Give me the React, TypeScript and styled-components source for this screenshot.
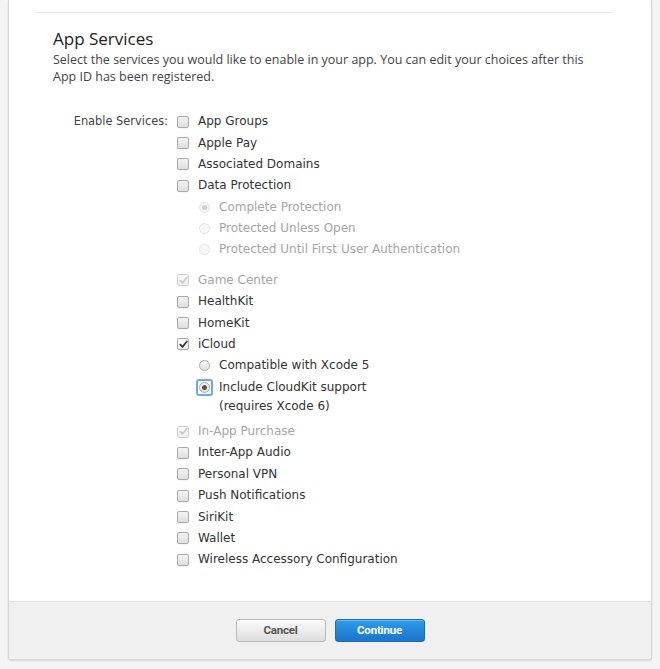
import React from 'react';
import styled, { createGlobalStyle } from 'styled-components';

const GlobalStyle = createGlobalStyle`
  html, body {
    margin: 0;
    padding: 0;
    background: #f4f4f4;
  }
  body {
    font-family: "DejaVu Sans", "Liberation Sans", sans-serif;
    color: #333333;
  }
`;

const Page = styled.div`
  padding: 0 8px 10px 8px;
`;

const Panel = styled.div`
  background: #ffffff;
  border: 1px solid #d6d6d6;
  border-top: none;
  border-radius: 0 0 3px 3px;
  box-shadow: 0 1px 2px rgba(0, 0, 0, 0.12);
  display: flex;
  flex-direction: column;
`;

const Body = styled.div`
  padding: 12px 39px 30px 27px;
`;

const Divider = styled.div`
  height: 1px;
  background: #e6e6e6;
`;

const Section = styled.div`
  padding-left: 17px;
`;

const Title = styled.h2`
  margin: 16px 0 0 0;
  font-family: "Open Sans", "Liberation Sans", sans-serif;
  font-weight: 400;
  font-size: 17px;
  line-height: 20px;
  color: #222222;
`;

const Description = styled.p`
  margin: 2px 0 0 0;
  font-family: "Open Sans", "Liberation Sans", sans-serif;
  font-size: 12.5px;
  line-height: 17px;
  color: #444444;
`;

const Form = styled.div`
  margin-top: 26px;
  display: grid;
  grid-template-columns: 115px 1fr;
  column-gap: 9px;
  align-items: start;
`;

const FieldLabel = styled.div`
  text-align: right;
  font-size: 11.4px;
  line-height: 21.33px;
  color: #444444;
`;

const Options = styled.div`
  display: flex;
  flex-direction: column;
`;

const Row = styled.label<{ $indent?: boolean; $disabled?: boolean }>`
  display: flex;
  align-items: flex-start;
  gap: 9px;
  min-height: 21.33px;
  padding: 1.2px 0;
  box-sizing: border-box;
  padding-left: ${(p) => (p.$indent ? '22px' : '0')};
  font-size: 12px;
  line-height: 19px;
  color: ${(p) => (p.$disabled ? '#a5a5a5' : '#333333')};
`;

const SubGroup = styled.div<{ $after: number }>`
  display: flex;
  flex-direction: column;
  margin-bottom: ${(p) => p.$after}px;
`;

const BoxWrap = styled.span`
  display: flex;
  align-items: center;
  height: 19px;
  flex: none;
`;

const CheckBox = styled.span<{ $checked?: boolean; $disabled?: boolean }>`
  width: 12px;
  height: 12px;
  box-sizing: border-box;
  border-radius: 2px;
  border: 1px solid ${(p) => (p.$disabled ? '#d2d2d2' : '#a9a9a9')};
  background: ${(p) => (p.$disabled
    ? 'linear-gradient(#fbfbfb, #f0f0f0)'
    : p.$checked ? 'linear-gradient(#ffffff, #f1f1f1)' : 'linear-gradient(#f4f4f4, #dedede)')};
  display: flex;
  align-items: center;
  justify-content: center;
  box-shadow: ${(p) => (p.$disabled ? 'none' : '0 0.5px 0 rgba(0,0,0,0.08)')};
`;

const Radio = styled.span<{ $checked?: boolean; $disabled?: boolean }>`
  width: 11px;
  height: 11px;
  box-sizing: border-box;
  border-radius: 50%;
  border: 1px solid ${(p) => (p.$disabled ? '#e2e2e2' : '#aaaaaa')};
  background: ${(p) => (p.$disabled ? '#f7f7f7' : 'linear-gradient(#f8f8f8, #e0e0e0)')};
  display: flex;
  align-items: center;
  justify-content: center;
  &::after {
    content: '';
    display: ${(p) => (p.$checked ? 'block' : 'none')};
    width: 5px;
    height: 5px;
    border-radius: 50%;
    background: ${(p) => (p.$disabled ? '#d0d0d0' : '#555555')};
  }
`;

const FocusRing = styled.span`
  display: flex;
  align-items: center;
  justify-content: center;
  width: 17px;
  height: 17px;
  margin: 0 -3px;
  box-sizing: border-box;
  border: 2px solid #6aa8f2;
  border-radius: 3px;
`;

const RowText = styled.span`
  white-space: pre-line;
`;

const Footer = styled.div`
  background: #f0f0f0;
  border-top: 1px solid #e0e0e0;
  border-radius: 0 0 3px 3px;
  padding: 17px 0 17px 0;
  display: flex;
  justify-content: center;
  gap: 9px;
`;

const Button = styled.button<{ $primary?: boolean }>`
  width: 90px;
  height: 23px;
  box-sizing: border-box;
  border-radius: 3px;
  font-family: "Roboto", "Liberation Sans", sans-serif;
  font-weight: 700;
  font-size: 11.5px;
  letter-spacing: -0.2px;
  cursor: pointer;
  border: 1px solid ${(p) => (p.$primary ? '#1b6cbb' : '#b9b9b9')};
  color: ${(p) => (p.$primary ? '#ffffff' : '#555555')};
  background: ${(p) => (p.$primary
    ? 'linear-gradient(#2b9cea, #1b74cb)'
    : 'linear-gradient(#fbfbfb, #dddddd)')};
  box-shadow: inset 0 1px 0 rgba(255, 255, 255, 0.3);
`;

const Check = ({ disabled }: { disabled?: boolean }): React.ReactElement => (
  <svg width="9" height="9" viewBox="0 0 9 9">
    <path d="M1.3 4.6 L3.5 6.9 L7.8 1.4" fill="none" stroke={disabled ? '#c8c8c8' : '#333333'} strokeWidth="1.7" strokeLinecap="round" strokeLinejoin="round" />
  </svg>
);

interface IOption {
  label: string;
  checked?: boolean;
  disabled?: boolean;
  sub?: { label: string; checked?: boolean; disabled?: boolean; focused?: boolean }[];
  subAfter?: number;
}

const options: IOption[] = [
  { label: 'App Groups' },
  { label: 'Apple Pay' },
  { label: 'Associated Domains' },
  {
    label: 'Data Protection',
    sub: [
      { label: 'Complete Protection', checked: true, disabled: true },
      { label: 'Protected Unless Open', disabled: true },
      { label: 'Protected Until First User Authentication', disabled: true },
    ],
    subAfter: 9,
  },
  { label: 'Game Center', checked: true, disabled: true },
  { label: 'HealthKit' },
  { label: 'HomeKit' },
  {
    label: 'iCloud',
    checked: true,
    sub: [
      { label: 'Compatible with Xcode 5' },
      { label: 'Include CloudKit support\n(requires Xcode 6)', checked: true, focused: true },
    ],
    subAfter: 4,
  },
  { label: 'In-App Purchase', checked: true, disabled: true },
  { label: 'Inter-App Audio' },
  { label: 'Personal VPN' },
  { label: 'Push Notifications' },
  { label: 'SiriKit' },
  { label: 'Wallet' },
  { label: 'Wireless Accessory Configuration' },
];

const App = (): React.ReactElement => {
  return (
    <Page>
      <GlobalStyle />
      <Panel>
        <Body>
          <Divider />
          <Section>
            <Title>App Services</Title>
            <Description>
              Select the services you would like to enable in your app. You can edit your choices after this
              <br />
              App ID has been registered.
            </Description>
            <Form>
              <FieldLabel>Enable Services:</FieldLabel>
              <Options>
                {options.map((option) => (
                  <React.Fragment key={option.label}>
                    <Row $disabled={option.disabled}>
                      <BoxWrap>
                        <CheckBox $checked={option.checked} $disabled={option.disabled}>
                          {option.checked && <Check disabled={option.disabled} />}
                        </CheckBox>
                      </BoxWrap>
                      <RowText>{option.label}</RowText>
                    </Row>
                    {option.sub && (
                      <SubGroup $after={option.subAfter ?? 0}>
                        {option.sub.map((sub) => (
                          <Row key={sub.label} $indent={true} $disabled={sub.disabled}>
                            <BoxWrap>
                              {sub.focused ? (
                                <FocusRing>
                                  <Radio $checked={sub.checked} $disabled={sub.disabled} />
                                </FocusRing>
                              ) : (
                                <Radio $checked={sub.checked} $disabled={sub.disabled} />
                              )}
                            </BoxWrap>
                            <RowText>{sub.label}</RowText>
                          </Row>
                        ))}
                      </SubGroup>
                    )}
                  </React.Fragment>
                ))}
              </Options>
            </Form>
          </Section>
        </Body>
        <Footer>
          <Button>Cancel</Button>
          <Button $primary={true}>Continue</Button>
        </Footer>
      </Panel>
    </Page>
  );
};

export default App;
